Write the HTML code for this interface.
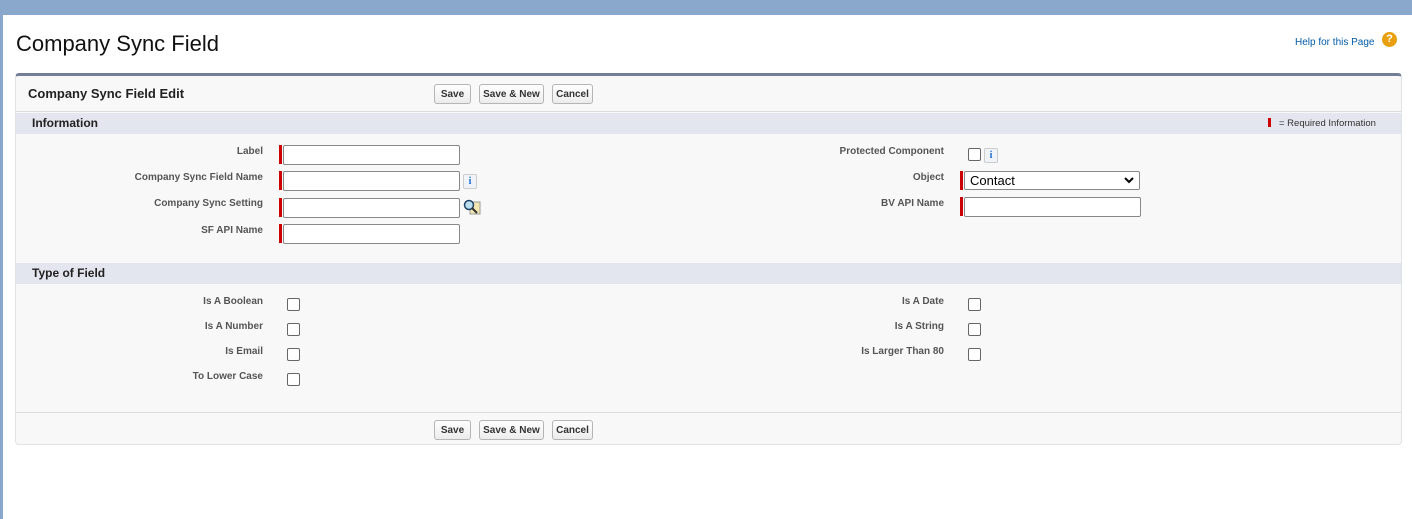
<!DOCTYPE html>
<html><head><style>
*{margin:0;padding:0;box-sizing:border-box}
body{width:1412px;height:519px;position:relative;background:#fff;font-family:"Liberation Sans",Arial,sans-serif;overflow:hidden}
.a{position:absolute}
.top{left:0;top:0;width:1412px;height:15px;background:#8aa8cc}
.ls{left:0;top:0;width:3px;height:519px;background:#8aa8cc}
.panel{left:15px;top:73px;width:1387px;height:372px;background:#f8f8f8;border:1px solid #e0e3e5;border-top:3px solid #747e96;border-radius:4px}
.btn{position:absolute;height:20px;border:1px solid #b5b5b5;border-radius:3px;background:linear-gradient(#fff,#ececec);font-size:10px;font-weight:bold;color:#333;text-align:center;line-height:20px}
.bar{left:16px;width:1385px;height:21px;background:#e3e6ee;font-size:12px;font-weight:bold;color:#222;padding-left:16px;line-height:21px}
.lab{position:absolute;font-size:10px;font-weight:bold;color:#555;text-align:right;width:250px}
.req{position:absolute;width:3px;height:19px;background:#c00}
.in{position:absolute;width:177px;height:20px;border:1px solid #888;border-radius:2px;background:#fff}
.cb{position:absolute;width:13px;height:13px;border:1px solid #666;border-radius:2px;background:#fff}
.info{position:absolute;width:14px;height:15px;border:1px solid #ccc;border-radius:2px;background:#f0f4f8;color:#1a6dd0;font:bold 10px "Liberation Serif",serif;text-align:center;line-height:13px}
</style></head><body>
<div class="a top"></div><div class="a ls"></div>
<div class="a" style="left:16px;top:31px;font-size:22px;color:#111">Company Sync Field</div>
<div class="a" style="left:1295px;top:37px;font-size:10px;color:#015ba7">Help for this Page</div>
<div class="a" style="left:1382px;top:32px;width:15px;height:15px;border-radius:50%;background:#e8a010;color:#fff;font-size:11px;font-weight:bold;text-align:center;line-height:15px">?</div>
<div class="a panel"></div>
<div class="a" style="left:28px;top:86px;font-size:13px;font-weight:bold;color:#222">Company Sync Field Edit</div>
<div class="btn" style="left:434px;top:84px;width:37px">Save</div>
<div class="btn" style="left:479px;top:84px;width:65px">Save &amp; New</div>
<div class="btn" style="left:552px;top:84px;width:41px">Cancel</div>
<div class="a" style="left:16px;top:111px;width:1385px;height:1px;background:#dcdcdc"></div>
<div class="a bar" style="top:113px">Information</div>
<div class="a" style="left:1268px;top:118px;width:3px;height:9px;background:#c00"></div>
<div class="a" style="left:1279px;top:118px;font-size:9.5px;color:#333">= Required Information</div>

<div class="lab" style="left:13px;top:146px">Label</div>
<div class="req" style="left:279px;top:145px"></div><div class="in" style="left:283px;top:145px"></div>
<div class="lab" style="left:13px;top:172px">Company Sync Field Name</div>
<div class="req" style="left:279px;top:171px"></div><div class="in" style="left:283px;top:171px"></div>
<div class="info" style="left:463px;top:174px">i</div>
<div class="lab" style="left:13px;top:198px">Company Sync Setting</div>
<div class="req" style="left:279px;top:198px"></div><div class="in" style="left:283px;top:198px"></div>
<svg class="a" style="left:463px;top:199px" width="18" height="16"><rect x="7" y="3" width="10" height="12" fill="#f4e6b0" stroke="#999"/><circle cx="6" cy="6" r="4.5" fill="#bde" stroke="#246" stroke-width="1.5"/><line x1="9" y1="9" x2="14" y2="14" stroke="#333" stroke-width="2"/></svg>
<div class="lab" style="left:13px;top:225px">SF API Name</div>
<div class="req" style="left:279px;top:224px"></div><div class="in" style="left:283px;top:224px"></div>

<div class="lab" style="left:694px;top:146px">Protected Component</div>
<div class="cb" style="left:968px;top:148px"></div>
<div class="info" style="left:984px;top:148px">i</div>
<div class="lab" style="left:694px;top:172px">Object</div>
<div class="req" style="left:960px;top:171px"></div>
<div class="in" style="left:964px;top:171px;width:176px;height:19px;font-size:13px;padding-left:5px;line-height:17px;color:#000">Contact<svg style="position:absolute;right:5px;top:5px" width="10" height="7"><path d="M1 1 L5 5 L9 1" stroke="#000" stroke-width="2" fill="none"/></svg></div>
<div class="lab" style="left:694px;top:198px">BV API Name</div>
<div class="req" style="left:960px;top:197px"></div><div class="in" style="left:964px;top:197px"></div>

<div class="a bar" style="top:263px">Type of Field</div>
<div class="lab" style="left:13px;top:296px">Is A Boolean</div><div class="cb" style="left:287px;top:298px"></div>
<div class="lab" style="left:13px;top:321px">Is A Number</div><div class="cb" style="left:287px;top:323px"></div>
<div class="lab" style="left:13px;top:346px">Is Email</div><div class="cb" style="left:287px;top:348px"></div>
<div class="lab" style="left:13px;top:371px">To Lower Case</div><div class="cb" style="left:287px;top:373px"></div>
<div class="lab" style="left:694px;top:296px">Is A Date</div><div class="cb" style="left:968px;top:298px"></div>
<div class="lab" style="left:694px;top:321px">Is A String</div><div class="cb" style="left:968px;top:323px"></div>
<div class="lab" style="left:694px;top:346px">Is Larger Than 80</div><div class="cb" style="left:968px;top:348px"></div>

<div class="a" style="left:16px;top:412px;width:1385px;height:1px;background:#dcdcdc"></div>
<div class="btn" style="left:434px;top:420px;width:37px">Save</div>
<div class="btn" style="left:479px;top:420px;width:65px">Save &amp; New</div>
<div class="btn" style="left:552px;top:420px;width:41px">Cancel</div>
</body></html>
